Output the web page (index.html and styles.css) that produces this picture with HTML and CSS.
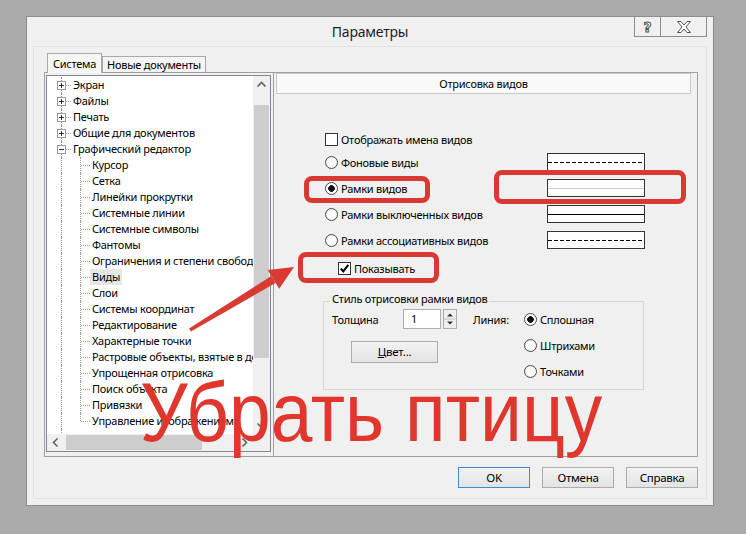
FILE: index.html
```html
<!DOCTYPE html>
<html lang="ru">
<head>
<meta charset="utf-8">
<title>Параметры</title>
<link rel="stylesheet" href="styles.css">
</head>
<body>
<div class="dialog">
  <div class="titlebar">
    <div></div>
    <div class="title">Параметры</div>
    <div class="tbtns">
      <span class="tb help">?</span>
      <span class="tb close"><svg width="14" height="12" viewBox="0 0 14 12"><polygon points="0.5,0.5 4,0.5 7,4 10,0.5 13.5,0.5 9,6 13.5,11.5 10,11.5 7,8 4,11.5 0.5,11.5 5,6" fill="#fff" stroke="#555" stroke-width="1"/></svg></span>
    </div>
  </div>
  <div class="client">
    <div class="tabs">
      <div class="tab sel">Система</div>
      <div class="tab">Новые документы</div>
    </div>
    <div class="tabpanel">
      <div class="tree">
        <div class="items">
          <div class="row"><span class="g h"><span class="exp plus"></span></span><span class="t">Экран</span></div>
          <div class="row"><span class="g h"><span class="exp plus"></span></span><span class="t">Файлы</span></div>
          <div class="row"><span class="g h"><span class="exp plus"></span></span><span class="t">Печать</span></div>
          <div class="row"><span class="g h"><span class="exp plus"></span></span><span class="t">Общие для документов</span></div>
          <div class="row"><span class="g h"><span class="exp"></span></span><span class="t">Графический редактор</span></div>
          <div class="row"><span class="g"></span><span class="g g2 h"></span><span class="t">Курсор</span></div>
          <div class="row"><span class="g"></span><span class="g g2 h"></span><span class="t">Сетка</span></div>
          <div class="row"><span class="g"></span><span class="g g2 h"></span><span class="t">Линейки прокрутки</span></div>
          <div class="row"><span class="g"></span><span class="g g2 h"></span><span class="t">Системные линии</span></div>
          <div class="row"><span class="g"></span><span class="g g2 h"></span><span class="t">Системные символы</span></div>
          <div class="row"><span class="g"></span><span class="g g2 h"></span><span class="t">Фантомы</span></div>
          <div class="row"><span class="g"></span><span class="g g2 h"></span><span class="t">Ограничения и степени свободы</span></div>
          <div class="row"><span class="g"></span><span class="g g2 h"></span><span class="t sel">Виды</span></div>
          <div class="row"><span class="g"></span><span class="g g2 h"></span><span class="t">Слои</span></div>
          <div class="row"><span class="g"></span><span class="g g2 h"></span><span class="t">Системы координат</span></div>
          <div class="row"><span class="g"></span><span class="g g2 h"></span><span class="t">Редактирование</span></div>
          <div class="row"><span class="g"></span><span class="g g2 h"></span><span class="t">Характерные точки</span></div>
          <div class="row"><span class="g"></span><span class="g g2 h"></span><span class="t">Растровые объекты, взятые в документ</span></div>
          <div class="row"><span class="g"></span><span class="g g2 h"></span><span class="t">Упрощенная отрисовка</span></div>
          <div class="row"><span class="g"></span><span class="g g2 h"></span><span class="t">Поиск объекта</span></div>
          <div class="row"><span class="g"></span><span class="g g2 h"></span><span class="t">Привязки</span></div>
          <div class="row"><span class="g"></span><span class="g g2 h last"></span><span class="t">Управление изображением</span></div>
          <div class="row"><span class="g"></span></div>
        </div>
        <div class="vscroll">
          <div class="arr"><svg width="17" height="17" viewBox="0 0 17 17"><polyline points="4.5,10.5 8.5,6.5 12.5,10.5" fill="none" stroke="#606060" stroke-width="1.6"/></svg></div>
          <div class="vthumb"></div>
          <div class="fill"></div>
          <div class="arr"><svg width="17" height="17" viewBox="0 0 17 17"><polyline points="4.5,6.5 8.5,10.5 12.5,6.5" fill="none" stroke="#606060" stroke-width="1.6"/></svg></div>
        </div>
        <div class="hscroll">
          <div class="arr"><svg width="17" height="17" viewBox="0 0 17 17"><polyline points="10.5,4.5 6.5,8.5 10.5,12.5" fill="none" stroke="#606060" stroke-width="1.6"/></svg></div>
          <div class="hthumb"></div>
          <div class="fill"></div>
          <div class="arr"><svg width="17" height="17" viewBox="0 0 17 17"><polyline points="6.5,4.5 10.5,8.5 6.5,12.5" fill="none" stroke="#606060" stroke-width="1.6"/></svg></div>
        </div>
        <div class="corner"></div>
      </div>
      <div class="props">
        <div class="phead">Отрисовка видов</div>
        <div class="opts">
          <div class="opt"><span class="cb"></span><span class="lbl">Отображать имена видов</span></div>
          <div></div>
          <div class="opt"><span class="rb"></span><span class="lbl">Фоновые виды</span></div>
          <div class="pv"><span class="ln dash"></span></div>
          <div class="opt"><span class="rb on"></span><span class="lbl">Рамки видов</span></div>
          <div class="pv"><span class="ln faint"></span></div>
          <div class="opt"><span class="rb"></span><span class="lbl">Рамки выключенных видов</span></div>
          <div class="pv"><span class="ln solid"></span></div>
          <div class="opt"><span class="rb"></span><span class="lbl">Рамки ассоциативных видов</span></div>
          <div class="pv"><span class="ln dash"></span></div>
          <div class="opt sub"><span class="cb"><svg width="11" height="11" viewBox="0 0 11 11"><polyline points="1.8,5.6 4.3,8.3 9.3,1.8" fill="none" stroke="#000" stroke-width="2.1"/></svg></span><span class="lbl">Показывать</span></div>
          <div></div>
        </div>
        <fieldset class="grp">
          <legend>Стиль отрисовки рамки видов</legend>
          <div class="grpgrid">
            <span class="glbl">Толщина</span>
            <span class="inp">1</span>
            <span class="spin"><svg width="12" height="18" viewBox="0 0 12 18"><line x1="0" y1="9" x2="12" y2="9" stroke="#c4c4c4"/><polygon points="3,6.5 9,6.5 6,3.5" fill="#333"/><polygon points="3,11.5 9,11.5 6,14.5" fill="#333"/></svg></span>
            <span class="glbl line">Линия:</span>
            <span class="opt"><span class="rb on"></span><span class="lbl">Сплошная</span></span>
            <span class="btn color"><u>Ц</u>вет...</span>
            <span class="opt r2"><span class="rb"></span><span class="lbl">Штрихами</span></span>
            <span class="opt r3"><span class="rb"></span><span class="lbl">Точками</span></span>
          </div>
        </fieldset>
      </div>
    </div>
    <div class="buttons">
      <span class="btn ok">OK</span>
      <span class="btn">Отмена</span>
      <span class="btn">Справка</span>
    </div>
  </div>
</div>

<div class="mark m1"></div>
<div class="mark m2"></div>
<div class="mark m3"></div>
<svg class="arrow" width="746" height="534" viewBox="0 0 746 534">
  <polygon points="190.9,331.6 189.1,328.4 271.4,275.9 275.6,282.9" fill="#d93a33"/>
  <polygon points="294,267 267.8,270 279.2,288.8" fill="#d93a33"/>
</svg>
<div class="big">Убрать птицу</div>
</body>
</html>
```

FILE: styles.css
```css
html, body {
  margin: 0;
  padding: 0;
}
body {
  width: 746px;
  height: 534px;
  overflow: hidden;
  position: relative;
  background: #ababab;
  font-family: "Noto Sans", "Open Sans", sans-serif;
  font-size: 11px;
  letter-spacing: -0.25px;
  color: #000;
}

.dialog {
  box-sizing: border-box;
  margin: 16px 0 0 26px;
  width: 688px;
  height: 490px;
  background: #f0f0f0;
  border: 1px solid #8c8c8c;
  display: flex;
  flex-direction: column;
}

.titlebar {
  flex: none;
  height: 29px;
  display: grid;
  grid-template-columns: 1fr auto 1fr;
}
.title {
  font-size: 14px;
  line-height: 29px;
  color: #1e1e1e;
  letter-spacing: -0.2px;
}
.tbtns {
  justify-self: end;
  align-self: start;
  display: flex;
  margin: -1px 6px 0 0;
}
.tb {
  box-sizing: border-box;
  height: 21px;
  border: 1px solid #8c8c8c;
  display: flex;
  align-items: center;
  justify-content: center;
  background: #f0f0f0;
}
.help {
  width: 27px;
  font-family: "DejaVu Sans", sans-serif;
  font-weight: bold;
  font-size: 14px;
  color: #fff;
  -webkit-text-stroke: 1px #505050;
}
.close {
  width: 46px;
  border-left: none;
}

.client {
  flex: 1;
  margin: 0 6px 6px;
  box-sizing: border-box;
  border: 1px solid #e2e2e2;
  padding: 6px 8px 0 10px;
  display: flex;
  flex-direction: column;
}

.tabs {
  display: flex;
  align-items: flex-end;
  height: 19px;
  padding-left: 3px;
  position: relative;
  z-index: 1;
}
.tab {
  box-sizing: border-box;
  height: 16px;
  width: 104px;
  border: 1px solid #a9a9a9;
  border-bottom: none;
  background: #f4f4f4;
  text-align: center;
  line-height: 15px;
  white-space: nowrap;
}
.tab.sel {
  width: 55px;
  height: 20px;
  margin-bottom: -1px;
  background: #f7f7f7;
  line-height: 19px;
}

.tabpanel {
  box-sizing: border-box;
  height: 385px;
  border: 1px solid #a0a0a0;
  display: flex;
  background: #f0f0f0;
}

.tree {
  box-sizing: border-box;
  flex: none;
  width: 225px;
  height: 377px;
  margin: 2px 0 0 1px;
  border: 1px solid #828790;
  background: #fff;
  display: grid;
  grid-template-columns: 206px 17px;
  grid-template-rows: 358px 17px;
}
.items {
  overflow: hidden;
  padding: 1px 0 0 4px;
}
.row {
  display: flex;
  height: 16px;
  line-height: 16px;
  white-space: nowrap;
}
.g {
  flex: none;
  position: relative;
  width: 20px;
  height: 16px;
}
.g::before {
  content: "";
  position: absolute;
  left: 10px;
  top: 0;
  bottom: 0;
  border-left: 1px dotted #9a9a9a;
}
.g.h::after {
  content: "";
  position: absolute;
  left: 11px;
  right: 0;
  top: 8px;
  border-top: 1px dotted #9a9a9a;
}
.g.g2 {
  width: 19px;
}
.g.g2::before {
  left: 9px;
}
.g.g2::after {
  left: 10px;
}
.g.last::before {
  bottom: 8px;
}
.exp {
  position: absolute;
  z-index: 1;
  left: 6px;
  top: 4px;
  width: 9px;
  height: 9px;
  box-sizing: border-box;
  border: 1px solid #9b9b9b;
  background: #fff;
}
.exp::before {
  content: "";
  position: absolute;
  left: 1px;
  top: 3px;
  width: 5px;
  height: 1px;
  background: #333;
}
.exp.plus::after {
  content: "";
  position: absolute;
  left: 3px;
  top: 1px;
  width: 1px;
  height: 5px;
  background: #333;
}
.t {
  padding: 0 2px;
}
.t.sel {
  background: #e6e6e6;
}

.vscroll {
  background: #f0f0f0;
  display: flex;
  flex-direction: column;
}
.arr {
  flex: none;
  width: 17px;
  height: 17px;
}
.arr svg {
  display: block;
}
.vthumb {
  flex: none;
  margin: 12px 1px 0 1px;
  height: 253px;
  background: #cdcdcd;
}
.fill {
  flex: 1;
}
.hscroll {
  background: #f0f0f0;
  display: flex;
}
.hthumb {
  flex: none;
  margin: 1px 0 1px 2px;
  width: 136px;
  background: #cdcdcd;
}
.corner {
  background: #f0f0f0;
}

.props {
  flex: 1;
  margin-left: 2px;
  border-left: 1px solid #a0a0a0;
  display: flex;
  flex-direction: column;
}
.phead {
  box-sizing: border-box;
  height: 21px;
  margin: 0 6px 0 2px;
  border: 1px solid #c8c8c8;
  background: #f9f9f9;
  text-align: center;
  line-height: 19px;
}
.opts {
  margin: 35px 0 0 51px;
  display: grid;
  grid-template-columns: 222px 98px;
  grid-template-rows: 20px repeat(4, 26px) 30px;
  align-items: center;
}
.opt {
  display: flex;
  align-items: center;
  white-space: nowrap;
}
.opt.sub {
  margin-left: 13px;
}
.lbl {
  margin-left: 3px;
}
.cb {
  box-sizing: border-box;
  width: 13px;
  height: 13px;
  border: 1px solid #333;
  background: #fff;
  display: flex;
  align-items: center;
  justify-content: center;
  flex: none;
}
.cb svg {
  display: block;
}
.rb {
  box-sizing: border-box;
  flex: none;
  width: 13px;
  height: 13px;
  border: 1px solid #4a4a4a;
  border-radius: 50%;
  background: radial-gradient(circle at 50% 50%, #fff 0 4px, #eaeaea 6px);
}
.rb.on {
  background: radial-gradient(circle at 50% 50%, #111 0 3px, #fff 3.6px);
}
.pv {
  box-sizing: border-box;
  width: 98px;
  height: 18px;
  border: 1px solid #333;
  background: #fff;
  display: flex;
  align-items: center;
}
.ln {
  display: block;
  width: 100%;
  height: 1px;
}
.ln.dash {
  background: repeating-linear-gradient(90deg, #000 0 4px, transparent 4px 6px);
}
.ln.faint {
  background: #cfcfcf;
}
.ln.solid {
  background: #000;
}

.grp {
  margin: 9px 0 0 49px;
  width: 321px;
  box-sizing: border-box;
  border: 1px solid #d5d5d5;
  padding: 0 0 5px 6px;
}
.grp legend {
  padding: 0 2px 4px;
  line-height: 14px;
}
.grpgrid {
  margin: -4px 0 0 2px;
  display: grid;
  grid-template-columns: 71px 38px 16px 67px auto;
  grid-template-rows: repeat(3, 26px);
  align-items: center;
}
.glbl.line {
  padding-left: 16px;
}
.inp {
  box-sizing: border-box;
  height: 20px;
  border: 1px solid #abadb3;
  background: #fff;
  padding-left: 7px;
  line-height: 18px;
}
.spin {
  box-sizing: border-box;
  margin-left: 2px;
  width: 14px;
  height: 20px;
  border: 1px solid #acacac;
  background: #efefef;
}
.spin svg {
  display: block;
}
.opt.r2 {
  grid-column: 5;
  grid-row: 2;
}
.opt.r3 {
  grid-column: 5;
  grid-row: 3;
}
.btn {
  box-sizing: border-box;
  width: 72px;
  height: 21px;
  border: 1px solid #acacac;
  background: linear-gradient(#f2f2f2, #e4e4e4);
  text-align: center;
  line-height: 19px;
  font-size: 11.5px;
}
.btn.color {
  grid-column: 1 / span 3;
  grid-row: 2 / span 2;
  align-self: start;
  margin: 9px 0 0 19px;
  width: 87px;
  height: 22px;
  line-height: 20px;
}
.btn.ok {
  border-color: #3d8ad6;
}
.buttons {
  display: flex;
  justify-content: flex-end;
  gap: 12px;
  margin-top: 10px;
}

.mark {
  position: absolute;
  box-sizing: border-box;
  border: 5px solid #d83a33;
  border-radius: 8px;
}
.m1 {
  left: 304px;
  top: 176px;
  width: 126px;
  height: 27px;
}
.m2 {
  left: 494px;
  top: 170px;
  width: 192px;
  height: 34px;
}
.m3 {
  left: 298px;
  top: 252px;
  width: 141px;
  height: 31px;
}
.arrow {
  position: absolute;
  left: 0;
  top: 0;
  pointer-events: none;
}
.big {
  position: absolute;
  left: 140px;
  top: 370px;
  font-family: "Liberation Sans", Arial, sans-serif;
  font-size: 84px;
  line-height: 84px;
  letter-spacing: 0;
  color: #df372e;
  white-space: nowrap;
  transform: scaleX(0.893);
  transform-origin: 0 0;
}
```
